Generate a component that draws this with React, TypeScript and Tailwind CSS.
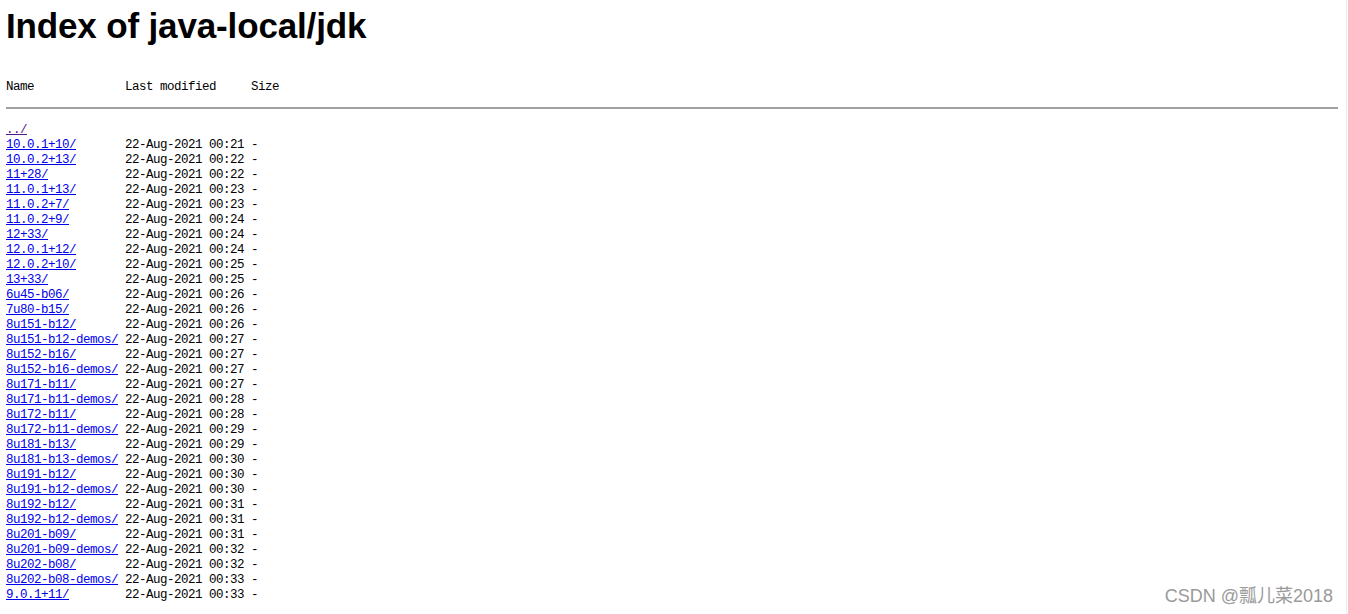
const entries: [string, string][] = [
  ['10.0.1+10/', '00:21'],
  ['10.0.2+13/', '00:22'],
  ['11+28/', '00:22'],
  ['11.0.1+13/', '00:23'],
  ['11.0.2+7/', '00:23'],
  ['11.0.2+9/', '00:24'],
  ['12+33/', '00:24'],
  ['12.0.1+12/', '00:24'],
  ['12.0.2+10/', '00:25'],
  ['13+33/', '00:25'],
  ['6u45-b06/', '00:26'],
  ['7u80-b15/', '00:26'],
  ['8u151-b12/', '00:26'],
  ['8u151-b12-demos/', '00:27'],
  ['8u152-b16/', '00:27'],
  ['8u152-b16-demos/', '00:27'],
  ['8u171-b11/', '00:27'],
  ['8u171-b11-demos/', '00:28'],
  ['8u172-b11/', '00:28'],
  ['8u172-b11-demos/', '00:29'],
  ['8u181-b13/', '00:29'],
  ['8u181-b13-demos/', '00:30'],
  ['8u191-b12/', '00:30'],
  ['8u191-b12-demos/', '00:30'],
  ['8u192-b12/', '00:31'],
  ['8u192-b12-demos/', '00:31'],
  ['8u201-b09/', '00:31'],
  ['8u201-b09-demos/', '00:32'],
  ['8u202-b08/', '00:32'],
  ['8u202-b08-demos/', '00:33'],
  ['9.0.1+11/', '00:33'],
];

const mono = { fontFamily: '"Liberation Mono", "Noto Sans CJK SC", monospace' };

export default function App() {
  return (
    <div className="relative h-[614px] w-full overflow-hidden bg-white text-black">
      <div className="mr-[10px] pl-[6px] pt-[6px]">
        <h1
          className="text-[35px] font-bold leading-[40px] tracking-[-0.15px]"
          style={{ fontFamily: '"Liberation Sans", "Noto Sans", sans-serif' }}
        >
          Index of java-local/jdk
        </h1>

        <div className="mt-[34px] text-[12.5px] leading-[15px] tracking-[-0.5px]" style={mono}>
          <div className="grid grid-cols-[119px_126px_auto] whitespace-pre">
            <span>Name</span>
            <span>Last modified</span>
            <span>Size</span>
          </div>
          <hr className="mt-[12px] mb-[14px] border-t-2 border-[#a0a0a0]" />
          <div className="whitespace-pre">
            <a href="#" className="text-[#551a8b] underline">../</a>
          </div>
          {entries.map(([name, time]) => (
            <div key={name} className="grid grid-cols-[119px_126px_auto] whitespace-pre">
              <a href="#" className="text-[#0000ee] underline">{name}</a>
              <span>22-Aug-2021 {time}</span>
              <span>-</span>
            </div>
          ))}
        </div>
      </div>

      <div className="absolute right-[1px] top-0 h-full w-px bg-[#ececec]" />

      <div
        className="absolute bottom-[7px] right-[15px] text-[18px] leading-[22px] text-[#9a9a9a]"
        style={{ fontFamily: '"Liberation Sans", "Noto Sans CJK SC", sans-serif' }}
      >
        CSDN @瓢儿菜2018
      </div>
    </div>
  );
}
